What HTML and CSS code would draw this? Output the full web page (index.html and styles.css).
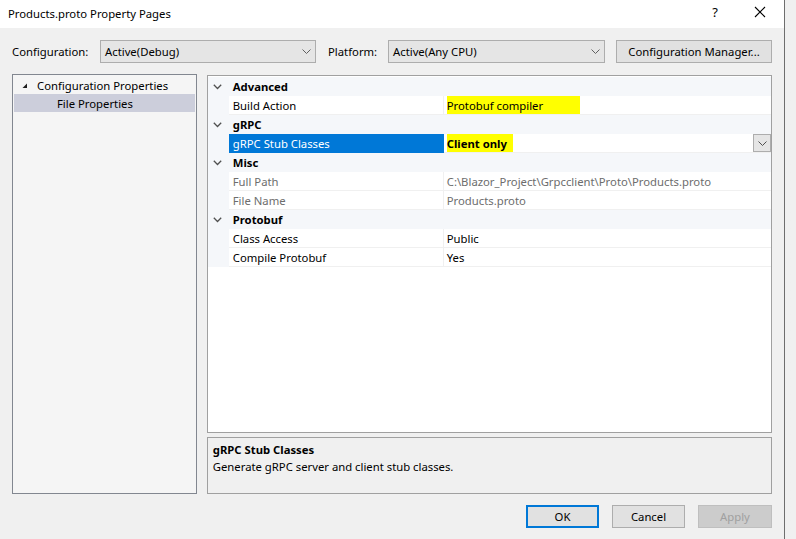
FILE: index.html
```html
<!DOCTYPE html>
<html>
<head>
<meta charset="utf-8">
<link rel="stylesheet" href="styles.css">
</head>
<body>
<div class="window">
  <div class="titlebar">
    <div class="title">Products.proto Property Pages</div>
    <div class="tb-btns">
      <span class="tb-help">?</span>
      <svg class="tb-close" width="12" height="12" viewBox="0 0 12 12"><path d="M1 1L11 11M11 1L1 11" stroke="#000" stroke-width="1.1" fill="none"/></svg>
    </div>
  </div>
  <div class="content">
    <div class="toolbar">
      <span class="lbl lbl-config">Configuration:</span>
      <div class="combo combo-config"><span>Active(Debug)</span><svg class="chev" width="9" height="5" viewBox="0 0 9 5"><path d="M0.5 0.5L4.5 4.5L8.5 0.5" stroke="#606060" fill="none"/></svg></div>
      <span class="lbl lbl-platform">Platform:</span>
      <div class="combo combo-platform"><span>Active(Any CPU)</span><svg class="chev" width="9" height="5" viewBox="0 0 9 5"><path d="M0.5 0.5L4.5 4.5L8.5 0.5" stroke="#606060" fill="none"/></svg></div>
      <div class="btn btn-cfgmgr">Configuration Manager...</div>
    </div>
    <div class="main">
      <div class="tree">
        <div class="tree-item root"><svg class="tri" width="6" height="6" viewBox="0 0 6 6"><path d="M5 0.5V5H0.5Z" fill="#1e1e1e"/></svg><span>Configuration Properties</span></div>
        <div class="tree-item child selected"><span>File Properties</span></div>
      </div>
      <div class="right">
        <div class="grid">
          <div class="cat"><svg class="cchev" width="9" height="6" viewBox="0 0 9 6"><path d="M0.8 0.8L4.5 4.5L8.2 0.8" stroke="#505050" stroke-width="1.3" fill="none"/></svg><span>Advanced</span></div>
          <div class="prop"><div class="pname">Build Action</div><div class="pval"><span class="hl hl-build">Protobuf compiler</span></div></div>
          <div class="cat"><svg class="cchev" width="9" height="6" viewBox="0 0 9 6"><path d="M0.8 0.8L4.5 4.5L8.2 0.8" stroke="#505050" stroke-width="1.3" fill="none"/></svg><span>gRPC</span></div>
          <div class="prop sel"><div class="pname">gRPC Stub Classes</div><div class="pval"><span class="hl hl-client">Client only</span><div class="dd"><svg width="9" height="5" viewBox="0 0 9 5"><path d="M0.5 0.5L4.5 4.5L8.5 0.5" stroke="#505050" fill="none"/></svg></div></div></div>
          <div class="cat"><svg class="cchev" width="9" height="6" viewBox="0 0 9 6"><path d="M0.8 0.8L4.5 4.5L8.2 0.8" stroke="#505050" stroke-width="1.3" fill="none"/></svg><span>Misc</span></div>
          <div class="prop ro"><div class="pname">Full Path</div><div class="pval">C:\Blazor_Project\Grpcclient\Proto\Products.proto</div></div>
          <div class="prop ro"><div class="pname">File Name</div><div class="pval">Products.proto</div></div>
          <div class="cat"><svg class="cchev" width="9" height="6" viewBox="0 0 9 6"><path d="M0.8 0.8L4.5 4.5L8.2 0.8" stroke="#505050" stroke-width="1.3" fill="none"/></svg><span>Protobuf</span></div>
          <div class="prop"><div class="pname">Class Access</div><div class="pval">Public</div></div>
          <div class="prop"><div class="pname">Compile Protobuf</div><div class="pval">Yes</div></div>
        </div>
        <div class="desc">
          <div class="desc-title">gRPC Stub Classes</div>
          <div class="desc-text">Generate gRPC server and client stub classes.</div>
        </div>
      </div>
    </div>
    <div class="buttons">
      <div class="btn btn-ok">OK</div>
      <div class="btn btn-cancel">Cancel</div>
      <div class="btn btn-apply">Apply</div>
    </div>
  </div>
</div>
</body>
</html>
```
FILE: styles.css
```css
html, body {
  margin: 0;
  padding: 0;
}
body {
  width: 796px;
  height: 539px;
  overflow: hidden;
  background: linear-gradient(to right, #d8d8d8, #ececec 6px, #f0f0f0);
  font-family: "Noto Sans", "Open Sans", sans-serif;
  font-size: 11.3px;
  color: #000;
}
.window {
  width: 784px;
  height: 539px;
  border-right: 1px solid #6e6e6e;
  background: #f0f0f0;
  display: flex;
  flex-direction: column;
}
.titlebar {
  height: 28px;
  background: #fff;
  display: flex;
  align-items: center;
  justify-content: space-between;
  flex: none;
}
.title {
  padding-left: 8px;
  font-size: 11.3px;
  margin-top: -2px;
}
.tb-btns {
  display: flex;
  align-items: center;
  margin-top: -4px;
}
.tb-help {
  font-size: 13px;
  margin-right: 36px;
}
.tb-close {
  margin-right: 18px;
}
.content {
  flex: 1;
  padding: 12px 12px 0 12px;
  display: flex;
  flex-direction: column;
}
.toolbar {
  display: flex;
  align-items: center;
  height: 23px;
}
.lbl-config { width: 88px; }
.lbl-platform { width: 60px; margin-left: 12px; }
.combo {
  box-sizing: border-box;
  height: 23px;
  border: 1px solid #adadad;
  background: #e5e5e5;
  display: flex;
  align-items: center;
  justify-content: space-between;
  padding: 0 4px 0 4px;
}
.combo-config { width: 216px; }
.combo-platform { width: 217px; }
.btn {
  box-sizing: border-box;
  height: 23px;
  border: 1px solid #adadad;
  background: #e1e1e1;
  display: flex;
  align-items: center;
  justify-content: center;
}
.btn-cfgmgr {
  width: 156px;
  margin-left: 11px;
}
.main {
  display: flex;
  margin-top: 11px;
  height: 420px;
}
.tree {
  box-sizing: border-box;
  width: 185px;
  height: 420px;
  border: 1px solid #828790;
  background: #f5f5f5;
  padding: 1px 1px;
}
.tree-item {
  height: 18px;
  display: flex;
  align-items: center;
}
.tree-item.root { padding-left: 8px; }
.tri { margin-right: 9px; margin-top: 1px; }
.tree-item.child { padding-left: 43px; }
.tree-item.selected { background: #cccedb; }
.right {
  margin-left: 10px;
  display: flex;
  flex-direction: column;
  width: 566px;
  margin-top: 1px;
}
.grid {
  box-sizing: border-box;
  height: 358px;
  border: 1px solid #a0a0a0;
  background: #fff;
  padding-top: 1px;
}
.cat {
  height: 19px;
  background: #f5f7fa;
  display: flex;
  align-items: center;
  font-weight: bold;
}
.cchev { margin-left: 5px; margin-right: 11px; }
.prop {
  height: 19px;
  display: flex;
  background: #f5f7fa;
}
.pname {
  box-sizing: border-box;
  margin-left: 21px;
  width: 215px;
  background: #fff;
  border-bottom: 1px solid #f0f0f0;
  border-right: 1px solid #f0f0f0;
  padding-left: 4px;
  display: flex;
  align-items: center;
}
.pval {
  box-sizing: border-box;
  flex: 1;
  background: #fff;
  border-bottom: 1px solid #f0f0f0;
  padding-left: 3px;
  display: flex;
  align-items: center;
  position: relative;
}
.prop.ro .pname, .prop.ro .pval { color: #6d6d6d; }
.prop.sel .pname { background: #0078d7; color: #fff; border-color: #0078d7; }
.hl { background: #ffff00; display: flex; align-items: center; height: 18px; }
.hl-build { width: 133px; }
.hl-client { width: 66px; font-weight: bold; }
.dd {
  position: absolute;
  right: 0;
  top: 0;
  box-sizing: border-box;
  width: 18px;
  height: 18px;
  border: 1px solid #adadad;
  background: #e5e5e5;
  display: flex;
  align-items: center;
  justify-content: center;
}
.desc {
  box-sizing: border-box;
  margin-top: 4px;
  height: 57px;
  border: 1px solid #a0a0a0;
  background: #f0f0f0;
  padding: 3px 5px;
}
.desc-title { font-weight: bold; line-height: 17px; }
.desc-text { line-height: 18px; }
.buttons {
  display: flex;
  justify-content: flex-end;
  gap: 13px;
  margin-top: 11px;
}
.btn-ok, .btn-cancel { width: 73px; }
.btn-apply { width: 74px; }
.btn-ok { border: 2px solid #0078d7; }
.btn-apply { background: #cccccc; border-color: #bfbfbf; color: #a0a0a0; }
```
